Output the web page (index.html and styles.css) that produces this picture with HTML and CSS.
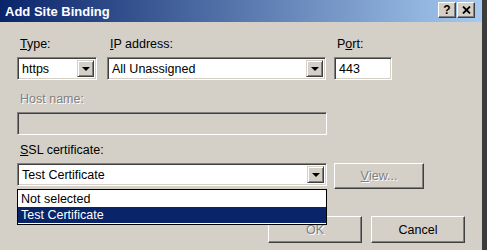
FILE: index.html
```html
<!DOCTYPE html>
<html lang="en">
<head>
	<meta charset="UTF-8">
	<title>Add Site Binding</title>
	<link rel="stylesheet" href="styles.css">
</head>
<body>
	<div class="window">
		<!-- 标题栏 -->
		<div class="titlebar">
			<span class="title">Add Site Binding</span>
			<div class="caption">
				<span class="cbtn help">?</span>
				<span class="cbtn close">
					<svg width="9" height="8" viewBox="0 0 9 8"><path d="M1 0.5 L8 7.5 M8 0.5 L1 7.5" stroke="#000" stroke-width="1.8"/></svg>
				</span>
			</div>
		</div>

		<div class="content">
			<!-- 第一行：类型 / IP / 端口 -->
			<div class="row">
				<div class="field f-type">
					<label><u>T</u>ype:</label>
					<div class="combo"><span class="val">https</span><span class="arrow"><i></i></span></div>
				</div>
				<div class="field f-ip">
					<label><u>I</u>P address:</label>
					<div class="combo"><span class="val">All Unassigned</span><span class="arrow"><i></i></span></div>
				</div>
				<div class="field f-port">
					<label>P<u>o</u>rt:</label>
					<div class="input"><span class="val">443</span></div>
				</div>
			</div>

			<!-- 主机名（禁用） -->
			<div class="field f-host">
				<label class="disabled">Host name:</label>
				<div class="input off"></div>
			</div>

			<!-- SSL 证书 -->
			<div class="field f-ssl">
				<label><u>S</u>SL certificate:</label>
				<div class="row">
					<div class="ssl-box">
						<div class="combo"><span class="val">Test Certificate</span><span class="arrow"><i></i></span></div>
						<ul class="droplist">
							<li>Not selected</li>
							<li class="active">Test Certificate</li>
						</ul>
					</div>
					<div class="btn view disabled"><u>V</u>iew...</div>
				</div>
			</div>

			<!-- 底部按钮 -->
			<div class="buttons">
				<div class="btn disabled">OK</div>
				<div class="btn">Cancel</div>
			</div>
		</div>
	</div>
</body>
</html>
```

FILE: styles.css
```css
*{
	margin: 0;padding: 0;
	box-sizing: border-box;
}
ul{
	list-style: none;
}
body{
	background: #d4d0c8;
	font: 12.5px "Liberation Sans", Arial, sans-serif;
	color: #000;
}
.window{
	width: 487px;
	height: 250px;
	background: #d4d0c8;
	border-right: 5px solid #3c3c3c;
	overflow: hidden;
}
/* 标题栏 */
.titlebar{
	height: 22px;
	background: linear-gradient(to right, #0a246a, #a6caf0);
	display: flex;
	align-items: center;
	justify-content: space-between;
	padding: 0 7px 0 5px;
}
.title{
	color: #fff;
	font-weight: bold;
	font-size: 13px;
}
.caption{
	display: flex;
	gap: 1px;
	margin-top: -2px;
}
.cbtn{
	width: 18px;
	height: 16px;
	background: #d4d0c8;
	border: 1px solid;
	border-color: #fff #404040 #404040 #fff;
	box-shadow: inset -1px -1px #808080;
	display: flex;
	align-items: center;
	justify-content: center;
	font-weight: bold;
	font-size: 12px;
	line-height: 1;
}
/* 内容 */
.content{
	padding: 14px 17px 0 17px;
}
.row{
	display: flex;
}
.field label{
	display: block;
	height: 17px;
	line-height: 17px;
	padding-left: 3px;
	margin-bottom: 4px;
}
.field label.disabled,.disabled{
	color: #808080;
	text-shadow: 1px 1px #fff;
}
.f-type{
	width: 80px;
	margin-right: 10px;
}
.f-ip{
	width: 219px;
	margin-right: 8px;
}
.f-port{
	width: 58px;
}
.combo,.input{
	height: 23px;
	background: #fff;
	border: 1px solid;
	border-color: #808080 #fff #fff #808080;
	box-shadow: inset 1px 1px #404040, inset -1px -1px #d4d0c8;
	display: flex;
	align-items: center;
	padding: 2px;
}
.val{
	flex: 1;
	padding-left: 2px;
	white-space: nowrap;
}
.input.off{
	background: #d4d0c8;
}
.arrow{
	width: 17px;
	height: 100%;
	background: #d4d0c8;
	border: 1px solid;
	border-color: #d4d0c8 #404040 #404040 #d4d0c8;
	box-shadow: inset 1px 1px #fff, inset -1px -1px #808080;
	display: flex;
	align-items: center;
	justify-content: center;
}
.arrow i{
	width: 0;
	height: 0;
	border-left: 4px solid transparent;
	border-right: 4px solid transparent;
	border-top: 4px solid #000;
}
.f-host{
	margin-top: 11px;
	width: 310px;
}
.f-ssl{
	margin-top: 7px;
}
.ssl-box{
	width: 310px;
	position: relative;
	margin-right: 7px;
}
.droplist{
	position: absolute;
	left: 0;
	top: 100%;
	width: 310px;
	background: #fff;
	border: 1px solid #000;
	padding: 1px 0;
}
.droplist li{
	height: 16px;
	line-height: 16px;
	padding-left: 3px;
}
.droplist li.active{
	background: #0a246a;
	color: #fff;
}
/* 按钮 */
.btn{
	height: 26px;
	background: #d4d0c8;
	border: 1px solid;
	border-color: #fff #404040 #404040 #fff;
	box-shadow: inset -1px -1px #808080;
	display: flex;
	align-items: center;
	justify-content: center;
}
.view{
	width: 90px;
}
.buttons{
	display: flex;
	justify-content: flex-end;
	gap: 9px;
	margin-top: 27px;
}
.buttons .btn{
	width: 94px;
	height: 27px;
}
```
